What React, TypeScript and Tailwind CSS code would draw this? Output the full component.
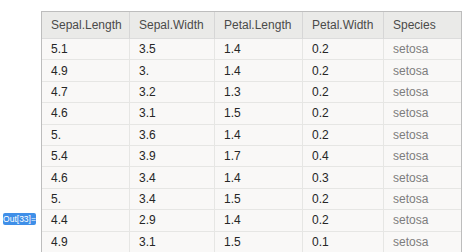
const headers = ["Sepal.Length", "Sepal.Width", "Petal.Length", "Petal.Width", "Species"];

const rows: string[][] = [
  ["5.1", "3.5", "1.4", "0.2", "setosa"],
  ["4.9", "3.", "1.4", "0.2", "setosa"],
  ["4.7", "3.2", "1.3", "0.2", "setosa"],
  ["4.6", "3.1", "1.5", "0.2", "setosa"],
  ["5.", "3.6", "1.4", "0.2", "setosa"],
  ["5.4", "3.9", "1.7", "0.4", "setosa"],
  ["4.6", "3.4", "1.4", "0.3", "setosa"],
  ["5.", "3.4", "1.5", "0.2", "setosa"],
  ["4.4", "2.9", "1.4", "0.2", "setosa"],
  ["4.9", "3.1", "1.5", "0.1", "setosa"],
];

const App = () => {
  return (
    <div className="flex h-[252px] w-[474px] overflow-hidden bg-white font-['Liberation_Sans',Arial,sans-serif] text-[12px]">
      {/* Cell label */}
      <div className="w-[41px] shrink-0 pl-[3px] pt-[213px]">
        <span className="block h-[12px] w-[33px] rounded-[2px] bg-[#3f8fe8] text-center text-[8.5px] leading-[12px] text-white">
          Out[33]=
        </span>
      </div>

      {/* Output table */}
      <div className="mt-[11px] h-fit border-l border-r border-t border-[#bdbdbd]">
        <div className="grid grid-cols-[88px_85px_88px_81px_77px]">
          {headers.map((h, i) => (
            <div
              key={h}
              className={`flex h-[27px] items-center border-b border-[#dcdcdc] bg-[#eaeae8] pl-[9px] text-[#4a4a4a] ${i < 4 ? "border-r border-r-[#d6d6d6]" : ""}`}
            >
              {h}
            </div>
          ))}
          {rows.map((row, r) =>
            row.map((v, c) => (
              <div
                key={`${r}-${c}`}
                className={`flex h-[21.4px] items-center border-b border-[#e6e6e4] bg-[#f9f8f7] pl-[9px] ${c < 4 ? "border-r border-r-[#e6e6e4] text-[#262626]" : "text-[#7d7d7d]"}`}
              >
                {v}
              </div>
            ))
          )}
        </div>
      </div>
    </div>
  );
};

export default App;
